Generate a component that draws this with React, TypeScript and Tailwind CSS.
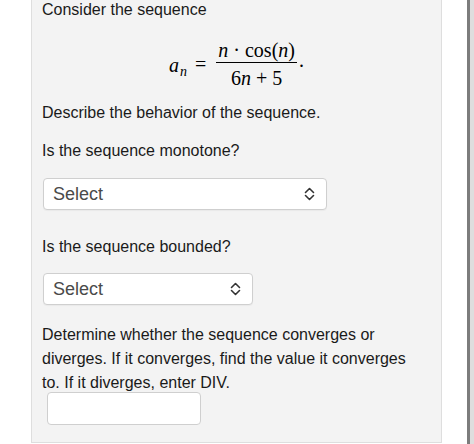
import React from 'react';

function UpDown() {
  return (
    <svg width="11" height="14" viewBox="0 0 11 14" fill="none" stroke="#333" strokeWidth="1.6" strokeLinecap="round" strokeLinejoin="round">
      <polyline points="1.5,5.5 5.5,1.5 9.5,5.5" />
      <polyline points="1.5,8.5 5.5,12.5 9.5,8.5" />
    </svg>
  );
}

function SelectBox({ width }: { width: string }) {
  return (
    <div className={`${width} ml-px h-[32px] bg-white border border-[#cfcfcf] rounded-[4px] flex items-center justify-between pl-[9px] pr-[11px] shadow-[0_1px_1px_rgba(0,0,0,0.04)]`}>
      <span className="text-[18px] text-[#4a4a4a]">Select</span>
      <UpDown />
    </div>
  );
}

export default function App() {
  return (
    <div className="w-[474px] h-[444px] bg-white flex font-['Liberation_Sans',Arial,sans-serif] text-[#1a1a1a] overflow-hidden">
      {/* Question panel */}
      <div className="ml-[31px] w-[411px] h-[443px] bg-[#f3f3f3] border-l border-r border-b border-[#dedede] pl-[10px] pr-[10px] flex flex-col">
        <p className="text-[16px] leading-[24px] -mt-[2px]">Consider the sequence</p>

        {/* Formula */}
        <div className="mt-[14px] flex items-center justify-center font-['Liberation_Serif','DejaVu_Serif',serif] text-[20px] text-black">
          <span className="italic mt-[3px]">
            a<span className="text-[14px] relative top-[4px] ml-[1px]">n</span>
          </span>
          <span className="ml-[8px] mr-[10px] mt-[1px]">=</span>
          <span className="inline-flex flex-col items-center">
            <span className="leading-[24px] px-[2px] mt-[2px]">
              <i>n</i>
              <span className="mx-[5px]">·</span>
              cos(<i>n</i>)
            </span>
            <span className="w-full border-t border-black" />
            <span className="leading-[24px] pt-[3px]">
              6<i>n</i>
              <span className="mx-[5px]">+</span>
              5
            </span>
          </span>
          <span className="ml-[2px] -mt-[6px]">.</span>
        </div>

        <p className="mt-[11px] text-[16px] leading-[24px]">Describe the behavior of the sequence.</p>

        <p className="mt-[14px] text-[16px] leading-[24px]">Is the sequence monotone?</p>
        <div className="mt-[15px]">
          <SelectBox width="w-[284px]" />
        </div>

        <p className="mt-[25px] text-[16px] leading-[24px]">Is the sequence bounded?</p>
        <div className="mt-[14px]">
          <SelectBox width="w-[210px]" />
        </div>

        <p className="mt-[18px] text-[16px] leading-[24px] pr-[10px]">
          Determine whether the sequence converges or diverges. If it converges, find the value it converges to. If it diverges, enter DIV.
        </p>
        <div className="-mt-[3px] ml-[5px] w-[154px] h-[33px] bg-white border border-[#cfcfcf] rounded-[4px]" />
      </div>

      {/* Right edge */}
      <div className="ml-[25px] w-[3px] h-full bg-[#7c7c7c]" />
      <div className="flex-1 h-full bg-[#dedede]" />
    </div>
  );
}
